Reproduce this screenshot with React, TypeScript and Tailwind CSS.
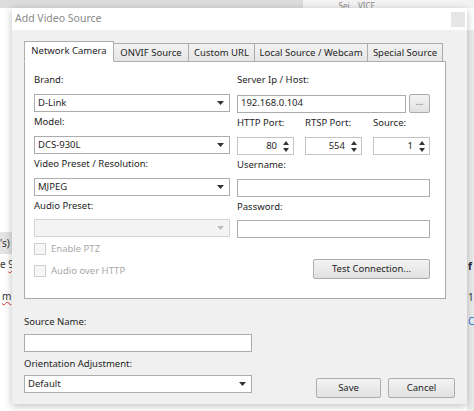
import React from "react";

const font = { fontFamily: '"Noto Sans", "Open Sans", "Liberation Sans", sans-serif' };

function Arrow() {
  return (
    <svg width="7" height="4" viewBox="0 0 7 4" className="shrink-0">
      <path d="M0 0h7L3.5 4z" fill="#333" />
    </svg>
  );
}

function Select({ value, width, disabled }: { value?: string; width: string; disabled?: boolean }) {
  return (
    <div
      className={`flex h-[18px] items-center justify-between border pl-[3px] pr-[5px] ${width} ${
        disabled ? "border-[#d4d4d4] bg-[#f4f4f4]" : "border-[#acacac] bg-white"
      }`}
    >
      <span className="text-[#1e1e1e]">{value}</span>
      {disabled ? (
        <svg width="7" height="4" viewBox="0 0 7 4"><path d="M0 0h7L3.5 4z" fill="#bdbdbd" /></svg>
      ) : (
        <Arrow />
      )}
    </div>
  );
}

function Input({ value, width }: { value?: string; width: string }) {
  return (
    <div className={`flex h-[18px] items-center border border-[#acacac] bg-white px-[3px] ${width}`}>
      <span className="text-[#1e1e1e]">{value}</span>
    </div>
  );
}

function Spin({ value }: { value: string }) {
  return (
    <div className="flex h-[18px] w-[57px] items-center justify-end gap-[6px] border border-[#c4c4c4] bg-white pr-[4px]">
      <span className="text-[#1e1e1e]">{value}</span>
      <svg width="6" height="11" viewBox="0 0 6 11">
        <path d="M0 4h6L3 0z M0 7h6L3 11z" fill="#333" />
      </svg>
    </div>
  );
}

function Label({ children }: { children: React.ReactNode }) {
  return <div className="h-[14px] whitespace-nowrap leading-[14px] text-[#1e1e1e]">{children}</div>;
}

function Button({ children, width, height = "h-[20px]" }: { children: React.ReactNode; width: string; height?: string }) {
  return (
    <div
      className={`flex ${height} ${width} items-center justify-center rounded-[2px] border border-[#acacac] bg-gradient-to-b from-[#f3f3f3] to-[#e1e1e1] text-[#1e1e1e]`}
    >
      {children}
    </div>
  );
}

function Check({ label }: { label: string }) {
  return (
    <div className="flex h-[14px] items-center gap-[5px] text-[#a8a8a8]">
      <div className="h-[12px] w-[12px] border border-[#d0d0d0] bg-[#f6f6f6]" />
      <span>{label}</span>
    </div>
  );
}

const tabs = [
  { t: "Network Camera", w: "w-[90px]" },
  { t: "ONVIF Source", w: "w-[76px]" },
  { t: "Custom URL", w: "w-[67px]" },
  { t: "Local Source / Webcam", w: "w-[114px]" },
  { t: "Special Source", w: "w-[76px]" },
];

export default function App() {
  return (
    <div className="relative h-[411px] w-[474px] overflow-hidden bg-[#f3f3f3] text-[9.5px]" style={font}>
      {/* app behind the dialog */}
      <div className="absolute left-0 top-[8px] h-[403px] w-[474px] bg-white" />
      <div className="absolute left-0 top-0 h-[8px] w-[303px] bg-[#dcdcdc]" />
      <div className="absolute left-[330px] top-[0px] text-[8px] text-[#888]">... Sei... VICE ...</div>
      <div className="absolute left-0 top-[232px] flex h-[22px] w-[14px] items-center bg-[#e4e4e4] text-[10px] text-[#333]">'s)</div>
      <div className="absolute left-0 top-[257px] h-[14px] w-[14px] text-[10px] text-[#333]">e <span className="underline decoration-[#d33] decoration-wavy">9</span></div>
      <div className="absolute left-[2px] top-[289px] text-[10px] text-[#333] underline decoration-[#d33] decoration-wavy">m</div>
      <div className="absolute left-[467px] top-[30px] h-[381px] w-[7px] bg-[#ececec]" />
      <div className="absolute left-[468px] top-[259px] text-[10px] font-bold text-[#223]">f</div>
      <div className="absolute left-[468px] top-[290px] text-[10px] text-[#333]">1</div>
      <div className="absolute left-[468px] top-[314px] text-[10px] text-[#2b78d0]">C</div>

      {/* dialog */}
      <div className="absolute left-[12px] top-[8px] flex h-[396px] w-[455px] flex-col bg-[#f0f0f0] shadow-[0_2px_8px_rgba(0,0,0,0.25)]">
        <div className="flex h-[22px] shrink-0 items-center justify-between bg-white pl-[3px] pr-[2px]">
          <span className="text-[10.5px] text-[#8a8a8a]">Add Video Source</span>
          <div className="h-[15px] w-[14px] bg-[#e6e6e6]" />
        </div>

        <div className="ml-[12px] mt-[12px] flex flex-col">
          <div className="flex h-[20px] items-end">
            {tabs.map((tab, i) => (
              <div
                key={tab.t}
                className={`flex items-center justify-center whitespace-nowrap border border-[#acacac] text-[#1e1e1e] ${tab.w} ${
                  i === 0
                    ? "relative z-10 h-[21px] border-b-white bg-white"
                    : "-ml-px h-[19px] border-b-0 bg-gradient-to-b from-[#f2f2f2] to-[#e5e5e5]"
                }`}
              >
                {tab.t}
              </div>
            ))}
          </div>
          <div className="-mt-px flex h-[238px] w-[422px] gap-[7px] border border-[#acacac] bg-white pl-[9px] pt-[11px]">
            <div className="flex w-[196px] flex-col">
              <Label>Brand:</Label>
              <div className="mt-[7px]"><Select value="D-Link" width="w-[196px]" /></div>
              <div className="mt-[3px]"><Label>Model:</Label></div>
              <div className="mt-[7px]"><Select value="DCS-930L" width="w-[196px]" /></div>
              <div className="mt-[3px]"><Label>Video Preset / Resolution:</Label></div>
              <div className="mt-[7px]"><Select value="MJPEG" width="w-[196px]" /></div>
              <div className="mt-[3px]"><Label>Audio Preset:</Label></div>
              <div className="mt-[6px]"><Select width="w-[196px]" disabled /></div>
              <div className="mt-[5px] flex flex-col gap-[8px]">
                <Check label="Enable PTZ" />
                <Check label="Audio over HTTP" />
              </div>
            </div>
            <div className="flex w-[193px] flex-col">
              <Label>Server Ip / Host:</Label>
              <div className="mt-[7px] flex items-center gap-[3px]">
                <Input value="192.168.0.104" width="w-[169px]" />
                <Button width="w-[21px]" height="h-[19px]"><span className="-mt-[3px] text-[#666]">...</span></Button>
              </div>
              <div className="mt-[3px] flex gap-[11px]">
                <div className="flex flex-col">
                  <Label>HTTP Port:</Label>
                  <div className="mt-[7px]"><Spin value="80" /></div>
                </div>
                <div className="flex flex-col">
                  <Label>RTSP Port:</Label>
                  <div className="mt-[7px]"><Spin value="554" /></div>
                </div>
                <div className="flex flex-col">
                  <Label>Source:</Label>
                  <div className="mt-[7px]"><Spin value="1" /></div>
                </div>
              </div>
              <div className="mt-[3px]"><Label>Username:</Label></div>
              <div className="mt-[7px]"><Input width="w-[193px]" /></div>
              <div className="mt-[3px]"><Label>Password:</Label></div>
              <div className="mt-[6px]"><Input width="w-[193px]" /></div>
              <div className="mt-[21px] flex justify-end">
                <Button width="w-[117px]">Test Connection...</Button>
              </div>
            </div>
          </div>
        </div>

        <div className="ml-[12px] mr-[12px] mt-[16px] flex items-end justify-between">
          <div className="flex flex-col">
            <Label>Source Name:</Label>
            <div className="mt-[5px]"><Input width="w-[228px]" /></div>
            <div className="mt-[5px]"><Label>Orientation Adjustment:</Label></div>
            <div className="mt-[4px]"><Select value="Default" width="w-[228px]" /></div>
          </div>
          <div className="-mb-[5px] flex gap-[7px]">
            <Button width="w-[65px]">Save</Button>
            <Button width="w-[67px]">Cancel</Button>
          </div>
        </div>
      </div>
    </div>
  );
}
